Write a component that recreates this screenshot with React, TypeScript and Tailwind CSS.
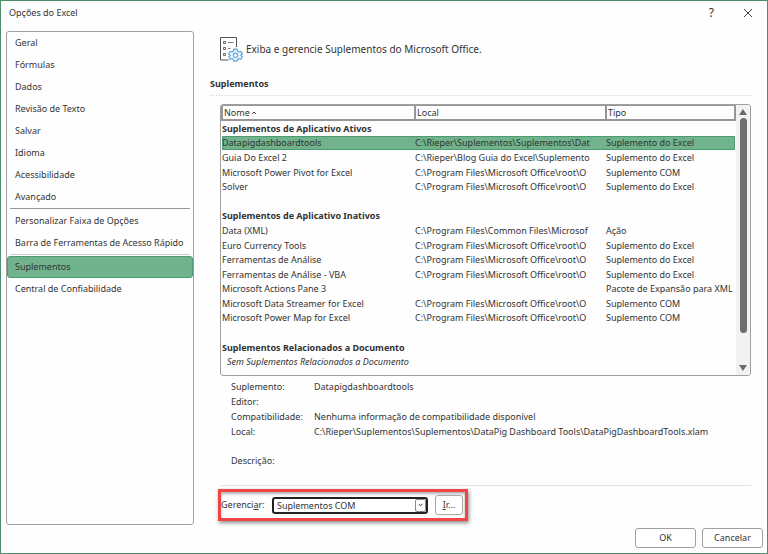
import { useState } from "react";

type Addin = { name: string; path: string; kind: string };

const generalPages = ["Geral", "Fórmulas", "Dados", "Revisão de Texto", "Salvar", "Idioma", "Acessibilidade", "Avançado"];
const customPages = ["Personalizar Faixa de Opções", "Barra de Ferramentas de Acesso Rápido"];
const addinPages = ["Suplementos", "Central de Confiabilidade"];

const officeRoot = "C:\\Program Files\\Microsoft Office\\root\\O";

const activeAddins: Addin[] = [
    { name: "Datapigdashboardtools", path: "C:\\Rieper\\Suplementos\\Suplementos\\Dat", kind: "Suplemento do Excel" },
    { name: "Guia Do Excel 2", path: "C:\\Rieper\\Blog Guia do Excel\\Suplemento", kind: "Suplemento do Excel" },
    { name: "Microsoft Power Pivot for Excel", path: officeRoot, kind: "Suplemento COM" },
    { name: "Solver", path: officeRoot, kind: "Suplemento do Excel" },
];

const inactiveAddins: Addin[] = [
    { name: "Data (XML)", path: "C:\\Program Files\\Common Files\\Microsof", kind: "Ação" },
    { name: "Euro Currency Tools", path: officeRoot, kind: "Suplemento do Excel" },
    { name: "Ferramentas de Análise", path: officeRoot, kind: "Suplemento do Excel" },
    { name: "Ferramentas de Análise - VBA", path: officeRoot, kind: "Suplemento do Excel" },
    { name: "Microsoft Actions Pane 3", path: "", kind: "Pacote de Expansão para XML" },
    { name: "Microsoft Data Streamer for Excel", path: officeRoot, kind: "Suplemento COM" },
    { name: "Microsoft Power Map for Excel", path: officeRoot, kind: "Suplemento COM" },
];

const details = [
    { label: "Suplemento:", value: "Datapigdashboardtools" },
    { label: "Editor:", value: "" },
    { label: "Compatibilidade:", value: "Nenhuma informação de compatibilidade disponível" },
    { label: "Local:", value: "C:\\Rieper\\Suplementos\\Suplementos\\DataPig Dashboard Tools\\DataPigDashboardTools.xlam" },
];

function AddinsIcon() {
    return (
        <svg width="24" height="26" viewBox="0 0 24 26" fill="none" className="shrink-0">
            <path d="M17.500 11v-9.500h-16v22.500h8" stroke="#555" />
            <path d="M4.500 5.500h2v2h-2zM4.500 11.500h2v2h-2zM4.500 17.500h2v2h-2z" stroke="#666" />
            <path d="M9 6.500h5.500M9 12.500h2.500" stroke="#777" />
            <path
                d="M15 13.200h3l.6 2 1.200.7 2-.5 1.500 2.500-1.500 1.400 1.500 1.400-1.500 2.600-2-.6-1.200.7-.6 1.800h-3l-.6-1.800-1.200-.7-2 .6-1.500-2.600 1.500-1.400-1.500-1.400 1.500-2.500 2 .5 1.200-.7z"
                fill="#e9f4fc"
                stroke="#62abe0"
                strokeWidth="1.300"
            />
            <circle cx="16.500" cy="19.300" r="2.100" fill="#fff" stroke="#62abe0" strokeWidth="1.200" />
        </svg>
    );
}

type PageListProps = { pages: string[]; current: string; onSelect: (page: string) => void };

function PageList({ pages, current, onSelect }: PageListProps) {
    return (
        <>
            {pages.map((page) => (
                <button
                    key={page}
                    onClick={() => onSelect(page)}
                    className={
                        page === current
                            ? "block h-[22px] w-full rounded-[3px] border border-[#4d9a73] bg-[#70b38c] px-[7px] text-left"
                            : "block h-[22px] w-full border border-transparent px-[7px] text-left"
                    }
                >
                    {page}
                </button>
            ))}
        </>
    );
}

type AddinRowsProps = { addins: Addin[]; selected: string; onSelect: (name: string) => void };

function AddinRows({ addins, selected, onSelect }: AddinRowsProps) {
    return (
        <>
            {addins.map((addin) => (
                <tr
                    key={addin.name}
                    onClick={() => onSelect(addin.name)}
                    className={addin.name === selected ? "rounded-[2px] bg-[#70b38c] outline outline-1 -outline-offset-1 outline-[#4d9a73]" : ""}
                >
                    <td className="p-0">{addin.name}</td>
                    <td className="p-0">{addin.path}</td>
                    <td className="p-0">{addin.kind}</td>
                </tr>
            ))}
        </>
    );
}

function GroupRow({ title }: { title: string }) {
    return (
        <tr>
            <th colSpan={3} className="p-0 text-left font-bold">{title}</th>
        </tr>
    );
}

function EmptyRow() {
    return (
        <tr>
            <td colSpan={3} className="p-0">&nbsp;</td>
        </tr>
    );
}

function App() {
    const [page, setPage] = useState("Suplementos");
    const [selected, setSelected] = useState("Datapigdashboardtools");
    const [manage, setManage] = useState("Suplementos COM");

    return (
        <main className="flex min-h-screen flex-col border border-[#4d8f6b] bg-[#fefefe] font-['Noto_Sans','Open_Sans',sans-serif] text-[9px] leading-[14px] text-[#333]">
            <header className="flex h-[30px] items-start justify-between pt-1 pr-[11px] pl-2">
                <h1 className="leading-4">Opções do Excel</h1>
                <div className="flex items-center gap-[26px]">
                    <button aria-label="Ajuda" className="text-xs leading-4">?</button>
                    <button aria-label="Fechar" className="flex h-4 w-4 items-center justify-center">
                        <svg width="10" height="10" viewBox="0 0 10 10" stroke="#444">
                            <path d="M1 1l8 8M9 1L1 9" />
                        </svg>
                    </button>
                </div>
            </header>

            <div className="flex grow gap-4 pr-4 pl-[5px]">
                {/* Pages of the options dialog */}
                <nav className="w-[188px] shrink-0 rounded-[3px] border border-[#a0a0a0]">
                    <PageList pages={generalPages} current={page} onSelect={setPage} />
                    <hr className="mx-[3px] mb-px border-[#999]" />
                    <PageList pages={customPages} current={page} onSelect={setPage} />
                    <hr className="mx-[3px] mb-px border-[#ccc]" />
                    <PageList pages={addinPages} current={page} onSelect={setPage} />
                </nav>

                <section className="min-w-0 grow">
                    <div className="flex items-center gap-[3px] pt-[5px] pl-[9px]">
                        <AddinsIcon />
                        <p className="text-[10px]">Exiba e gerencie Suplementos do Microsoft Office.</p>
                    </div>

                    <h2 className="mt-[15px] border-b border-dotted border-[#d8d8d8] pb-1 font-bold">Suplementos</h2>

                    <div className="mt-2 ml-[10px] flex h-[272px] overflow-hidden rounded-[3px] border border-[#a0a0a0]">
                        <div className="min-w-0 grow overflow-hidden">
                            <table className="h-[264px] w-full table-fixed border-collapse leading-[13px] whitespace-nowrap">
                                <thead>
                                    <tr>
                                        <th className="w-[193px] border-2 border-t border-[#969696] p-0 pl-px text-left font-normal">
                                            <span className="flex items-center gap-px">
                                                Nome
                                                <svg width="6" height="4" viewBox="0 0 6 4" fill="none" stroke="#444">
                                                    <path d="M1 3l2-2 2 2" />
                                                </svg>
                                            </span>
                                        </th>
                                        <th className="w-[191px] border-2 border-t border-[#969696] p-0 pl-px text-left font-normal">Local</th>
                                        <th className="border-2 border-t border-[#969696] p-0 pl-px text-left font-normal">Tipo</th>
                                    </tr>
                                </thead>
                                <tbody>
                                    <GroupRow title="Suplementos de Aplicativo Ativos" />
                                    <AddinRows addins={activeAddins} selected={selected} onSelect={setSelected} />
                                    <EmptyRow />
                                    <GroupRow title="Suplementos de Aplicativo Inativos" />
                                    <AddinRows addins={inactiveAddins} selected={selected} onSelect={setSelected} />
                                    <EmptyRow />
                                    <GroupRow title="Suplementos Relacionados a Documento" />
                                    <tr>
                                        <td colSpan={3} className="p-0 pl-[5px] italic">Sem Suplementos Relacionados a Documento</td>
                                    </tr>
                                </tbody>
                            </table>
                        </div>
                        <div className="flex w-[14px] shrink-0 flex-col items-center bg-[#f2f2f2] py-1">
                            <svg width="8" height="6" viewBox="0 0 8 6" fill="#6b6b6b">
                                <path d="M4 0l4 6H0z" />
                            </svg>
                            <div className="mt-[3px] mb-[32px] w-[7px] grow rounded-full bg-[#6e6e6e]" />
                            <svg width="8" height="6" viewBox="0 0 8 6" fill="#6b6b6b">
                                <path d="M0 0h8L4 6z" />
                            </svg>
                        </div>
                    </div>

                    {/* Details of the selected add-in */}
                    <dl className="mt-[3px] ml-[21px] leading-[15px]">
                        {details.map((item) => (
                            <div key={item.label} className="flex">
                                <dt className="w-[83px] shrink-0">{item.label}</dt>
                                <dd className="whitespace-nowrap">{item.value}</dd>
                            </div>
                        ))}
                        <div className="mt-[14px] flex">
                            <dt>Descrição:</dt>
                            <dd />
                        </div>
                    </dl>

                    <hr className="mt-[17px] ml-[10px] border-[#e2e2e2]" />

                    <div className="mt-[3px] ml-2 flex w-[250px] items-center border-[3px] border-[#f04545] py-[3px] shadow-[1px_2px_4px_rgba(0,0,0,0.45),inset_0_2px_3px_rgba(0,0,0,0.3)]">
                        <label htmlFor="manage" className="w-[51px] shrink-0">
                            Gerenci<u>a</u>r:
                        </label>
                        <div className="relative w-[156px]">
                            <select
                                id="manage"
                                value={manage}
                                onChange={(e) => setManage(e.target.value)}
                                className="block h-[17px] w-full appearance-none rounded-[3px] border-2 border-[#222] bg-white pl-[3px] leading-[13px]"
                            >
                                <option>Suplementos COM</option>
                                <option>Suplementos do Excel</option>
                            </select>
                            <span className="pointer-events-none absolute inset-y-[2px] right-[2px] flex w-[11px] items-center justify-center rounded-[2px] border border-[#888] bg-white">
                                <svg width="5" height="4" viewBox="0 0 5 4" fill="none" stroke="#333">
                                    <path d="M.5.8l2 2 2-2" />
                                </svg>
                            </span>
                        </div>
                        <button className="ml-[7px] h-5 w-7 rounded-[3px] border border-[#a8a8a8] bg-white">
                            <u>I</u>r...
                        </button>
                    </div>
                </section>
            </div>

            <footer className="flex h-[28px] items-start justify-end gap-[6px] pt-[3px] pr-1">
                <button className="h-5 w-[61px] rounded-[3px] border border-[#a0a0a0] bg-white">OK</button>
                <button className="h-5 w-[61px] rounded-[3px] border border-[#a0a0a0] bg-white">Cancelar</button>
            </footer>
        </main>
    );
}

export default App;
